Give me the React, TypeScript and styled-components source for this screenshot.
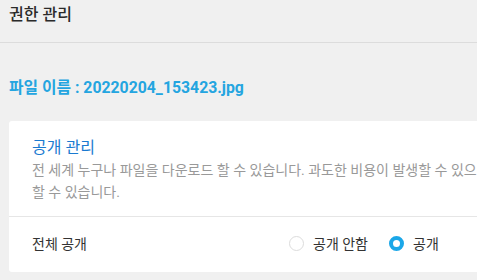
import React, { useState } from 'react';
import styled, { createGlobalStyle } from 'styled-components';

const GlobalStyle = createGlobalStyle`
  html, body {
    margin: 0;
    padding: 0;
    background: #f0f0f0;
    font-family: Roboto, 'Noto Sans CJK KR', sans-serif;
    overflow: hidden;
  }
`;

const Page = styled('div')`
  width: 477px;
  height: 280px;
  background: #f0f0f0;
  display: flex;
  flex-direction: column;
  overflow: hidden;
`;

const TopBar = styled('div')`
  height: 42px;
  border-bottom: 1px solid #dcdcdc;
  padding: 0 9px;
  display: flex;
  align-items: flex-start;
`;

const PageTitle = styled('h1')`
  margin: 5px 0 0;
  font-size: 16px;
  font-weight: 500;
  color: #2a2a2a;
  line-height: 20px;
`;

const Body = styled('div')`
  padding: 35px 0 0 9px;
  display: flex;
  flex-direction: column;
`;

const FileName = styled('div')`
  font-size: 15.8px;
  font-weight: 700;
  color: #24a5e0;
  line-height: 20px;
  white-space: nowrap;
`;

const Card = styled('section')`
  margin-top: 23px;
  width: 560px;
  background: #fff;
  border-radius: 3px 0 0 3px;
`;

const CardHead = styled('div')`
  padding: 16px 23px 13px;
  border-bottom: 1px solid #e6e6e6;
`;

const CardTitle = styled('h2')`
  margin: 0;
  font-size: 16px;
  font-weight: 400;
  color: #1a7ad0;
  line-height: 22px;
`;

const CardDesc = styled('p')`
  margin: 0;
  font-size: 14px;
  color: #999;
  line-height: 22px;
  width: 500px;
`;

const Row = styled('div')`
  height: 55px;
  padding: 0 23px 3px;
  box-sizing: border-box;
  display: flex;
  align-items: center;
`;

const RowLabel = styled('span')`
  font-size: 14px;
  color: #333;
  width: 257px;
`;

const RadioGroup = styled('div')`
  display: flex;
  align-items: center;
  gap: 21px;
`;

const RadioLabel = styled('label')`
  display: flex;
  align-items: center;
  gap: 9px;
  font-size: 14px;
  color: #333;
  cursor: pointer;
`;

const Dot = styled('span')<{ $on: boolean }>`
  width: 15px;
  height: 15px;
  box-sizing: border-box;
  border-radius: 50%;
  background: #fff;
  border: ${(p) => (p.$on ? '4.5px solid #1ba7e8' : '1px solid #dcdcdc')};
`;

type Choice = 'private' | 'public';

const options: { key: Choice; label: string }[] = [
  { key: 'private', label: '공개 안함' },
  { key: 'public', label: '공개' },
];

export default function App() {
  const [value, setValue] = useState<Choice>('public');
  return (
    <Page>
      <GlobalStyle />
      <TopBar>
        <PageTitle>권한 관리</PageTitle>
      </TopBar>
      <Body>
        <FileName>파일 이름 : 20220204_153423.jpg</FileName>
        <Card>
          <CardHead>
            <CardTitle>공개 관리</CardTitle>
            <CardDesc>
              전 세계 누구나 파일을 다운로드 할 수 있습니다. 과도한 비용이 발생할 수 있으니 주의
              할 수 있습니다.
            </CardDesc>
          </CardHead>
          <Row>
            <RowLabel>전체 공개</RowLabel>
            <RadioGroup>
              {options.map((o) => (
                <RadioLabel key={o.key} onClick={() => setValue(o.key)}>
                  <Dot $on={value === o.key} />
                  {o.label}
                </RadioLabel>
              ))}
            </RadioGroup>
          </Row>
        </Card>
      </Body>
    </Page>
  );
}
